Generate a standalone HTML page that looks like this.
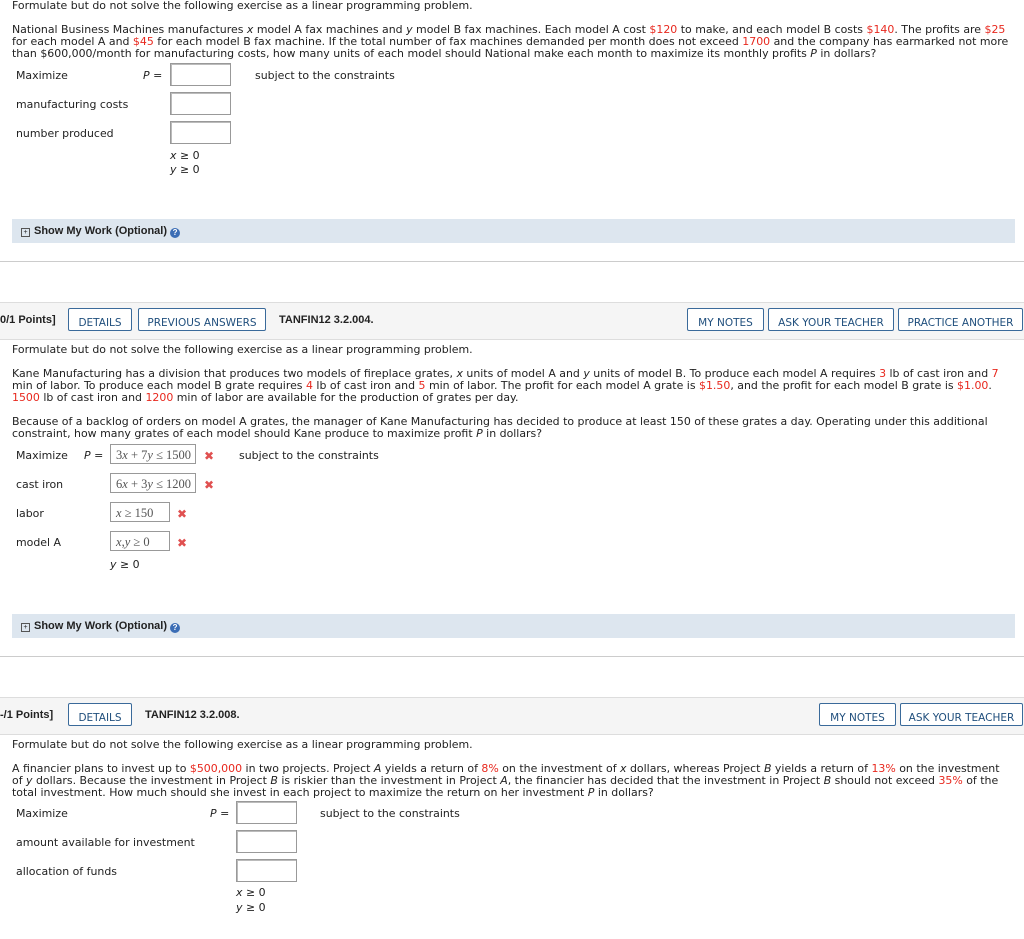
<!DOCTYPE html>
<html><head><meta charset="utf-8"><style>
body{margin:0;width:1024px;height:939px;position:relative;background:#fff;font-family:"DejaVu Sans","Liberation Sans",sans-serif;font-size:10.95px;color:#222;overflow:hidden}
.a{position:absolute;white-space:nowrap;line-height:12px;margin-top:1px}
.p{position:absolute;line-height:12px;white-space:nowrap;margin-top:1px}
.r{color:#e8281e}
.box{position:absolute;border:1px solid #999;box-shadow:inset 1px 1px 0 #bbb;background:#fff;height:21px}
.ans{position:absolute;border:1px solid #999;background:#fff;height:20px;font-family:"Liberation Serif",serif;font-size:12.5px;line-height:20px;padding-left:5px;color:#555;box-sizing:border-box}
.x{position:absolute;color:#e05050;font-size:12px;font-weight:bold;line-height:12px}
.smw{position:absolute;left:12px;width:1003px;height:24px;background:#dde6ef;font-family:"Liberation Sans",sans-serif;font-weight:bold;font-size:11px;line-height:25px}
.hr{position:absolute;left:0;width:1024px;height:1px;background:#ccc}
.band{position:absolute;left:0;width:1024px;background:#f5f5f5;border-top:1px solid #ddd;border-bottom:1px solid #ddd}
.btn{position:absolute;border:1px solid #3a6a9a;border-radius:2px;background:#fff;color:#1f4e7c;font-family:"DejaVu Sans",sans-serif;font-size:10.5px;height:23px;line-height:28px;text-align:center;box-sizing:border-box}
.hb{position:absolute;font-family:"Liberation Sans",sans-serif;font-weight:bold;font-size:11px;color:#222;line-height:14px}
.pl{display:inline-block;width:7px;height:7px;border:1px solid #555;font-size:7px;line-height:7px;text-align:center;vertical-align:0;margin:0 4px 0 9px;font-weight:normal}
.q{display:inline-block;width:10px;height:10px;border-radius:50%;background:#3b6db5;color:#fff;font-size:8px;line-height:10px;text-align:center;vertical-align:-1px;margin-left:3px}
</style></head><body>

<div class="a" style="left:12px;top:-1px">Formulate but do not solve the following exercise as a linear programming problem.</div>
<div class="p" style="left:12px;top:23px">National Business Machines manufactures <i>x</i> model A fax machines and <i>y</i> model B fax machines. Each model A cost <span class="r">$120</span> to make, and each model B costs <span class="r">$140</span>. The profits are <span class="r">$25</span><br>for each model A and <span class="r">$45</span> for each model B fax machine. If the total number of fax machines demanded per month does not exceed <span class="r">1700</span> and the company has earmarked not more<br>than $600,000/month for manufacturing costs, how many units of each model should National make each month to maximize its monthly profits <i>P</i> in dollars?</div>
<div class="a" style="left:16px;top:69px">Maximize</div>
<div class="a" style="left:143px;top:69px"><i>P</i> =</div>
<div class="box" style="left:170px;top:63px;width:59px"></div>
<div class="a" style="left:255px;top:69px">subject to the constraints</div>
<div class="a" style="left:16px;top:98px">manufacturing costs</div>
<div class="box" style="left:170px;top:92px;width:59px"></div>
<div class="a" style="left:16px;top:127px">number produced</div>
<div class="box" style="left:170px;top:121px;width:59px"></div>
<div class="a" style="left:170px;top:149px"><i>x</i> ≥ 0</div>
<div class="a" style="left:170px;top:163px"><i>y</i> ≥ 0</div>
<div class="smw" style="top:219px"><span class="pl">+</span>Show My Work (Optional)<span class="q">?</span></div>
<div class="hr" style="top:261px"></div>

<div class="band" style="top:302px;height:36px"></div>
<div class="hb" style="left:0;top:313px">0/1 Points]</div>
<div class="btn" style="left:68px;top:308px;width:64px">DETAILS</div>
<div class="btn" style="left:138px;top:308px;width:128px">PREVIOUS ANSWERS</div>
<div class="hb" style="left:279px;top:313px">TANFIN12 3.2.004.</div>
<div class="btn" style="left:687px;top:308px;width:77px">MY NOTES</div>
<div class="btn" style="left:768px;top:308px;width:126px">ASK YOUR TEACHER</div>
<div class="btn" style="left:898px;top:308px;width:125px">PRACTICE ANOTHER</div>

<div class="a" style="left:12px;top:343px">Formulate but do not solve the following exercise as a linear programming problem.</div>
<div class="p" style="left:12px;top:367px">Kane Manufacturing has a division that produces two models of fireplace grates, <i>x</i> units of model A and <i>y</i> units of model B. To produce each model A requires <span class="r">3</span> lb of cast iron and <span class="r">7</span><br>min of labor. To produce each model B grate requires <span class="r">4</span> lb of cast iron and <span class="r">5</span> min of labor. The profit for each model A grate is <span class="r">$1.50</span>, and the profit for each model B grate is <span class="r">$1.00</span>.<br><span class="r">1500</span> lb of cast iron and <span class="r">1200</span> min of labor are available for the production of grates per day.</div>
<div class="p" style="left:12px;top:415px">Because of a backlog of orders on model A grates, the manager of Kane Manufacturing has decided to produce at least 150 of these grates a day. Operating under this additional<br>constraint, how many grates of each model should Kane produce to maximize profit <i>P</i> in dollars?</div>
<div class="a" style="left:16px;top:449px">Maximize</div>
<div class="a" style="left:84px;top:449px"><i>P</i> =</div>
<div class="ans" style="left:110px;top:444px;width:86px">3<i>x</i> + 7<i>y</i> ≤ 1500</div>
<div class="x" style="left:204px;top:450px">✖</div>
<div class="a" style="left:239px;top:449px">subject to the constraints</div>
<div class="a" style="left:16px;top:478px">cast iron</div>
<div class="ans" style="left:110px;top:473px;width:86px">6<i>x</i> + 3<i>y</i> ≤ 1200</div>
<div class="x" style="left:204px;top:479px">✖</div>
<div class="a" style="left:16px;top:507px">labor</div>
<div class="ans" style="left:110px;top:502px;width:60px"><i>x</i> ≥ 150</div>
<div class="x" style="left:177px;top:508px">✖</div>
<div class="a" style="left:16px;top:536px">model A</div>
<div class="ans" style="left:110px;top:531px;width:60px"><i>x</i>,<i>y</i> ≥ 0</div>
<div class="x" style="left:177px;top:537px">✖</div>
<div class="a" style="left:110px;top:558px"><i>y</i> ≥ 0</div>
<div class="smw" style="top:614px"><span class="pl">+</span>Show My Work (Optional)<span class="q">?</span></div>
<div class="hr" style="top:656px"></div>

<div class="band" style="top:697px;height:36px"></div>
<div class="hb" style="left:0;top:708px">-/1 Points]</div>
<div class="btn" style="left:68px;top:703px;width:64px">DETAILS</div>
<div class="hb" style="left:145px;top:708px">TANFIN12 3.2.008.</div>
<div class="btn" style="left:819px;top:703px;width:77px">MY NOTES</div>
<div class="btn" style="left:900px;top:703px;width:123px">ASK YOUR TEACHER</div>

<div class="a" style="left:12px;top:738px">Formulate but do not solve the following exercise as a linear programming problem.</div>
<div class="p" style="left:12px;top:762px">A financier plans to invest up to <span class="r">$500,000</span> in two projects. Project <i>A</i> yields a return of <span class="r">8%</span> on the investment of <i>x</i> dollars, whereas Project <i>B</i> yields a return of <span class="r">13%</span> on the investment<br>of <i>y</i> dollars. Because the investment in Project <i>B</i> is riskier than the investment in Project <i>A</i>, the financier has decided that the investment in Project <i>B</i> should not exceed <span class="r">35%</span> of the<br>total investment. How much should she invest in each project to maximize the return on her investment <i>P</i> in dollars?</div>
<div class="a" style="left:16px;top:807px">Maximize</div>
<div class="a" style="left:210px;top:807px"><i>P</i> =</div>
<div class="box" style="left:236px;top:801px;width:59px"></div>
<div class="a" style="left:320px;top:807px">subject to the constraints</div>
<div class="a" style="left:16px;top:836px">amount available for investment</div>
<div class="box" style="left:236px;top:830px;width:59px"></div>
<div class="a" style="left:16px;top:865px">allocation of funds</div>
<div class="box" style="left:236px;top:859px;width:59px"></div>
<div class="a" style="left:236px;top:886px"><i>x</i> ≥ 0</div>
<div class="a" style="left:236px;top:901px"><i>y</i> ≥ 0</div>
</body></html>
